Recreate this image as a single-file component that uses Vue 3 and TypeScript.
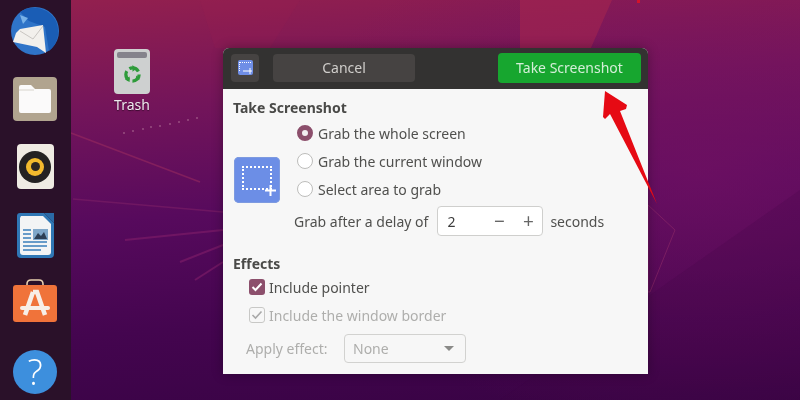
<script setup lang="ts">
const captureModes = [
  { label: 'Grab the whole screen', selected: true },
  { label: 'Grab the current window', selected: false },
  { label: 'Select area to grab', selected: false }
]
const specks = [
  [124, 133], [133, 131], [143, 129], [151, 127], [160, 126], [170, 124], [179, 122], [188, 120], [197, 118]
]
</script>

<template>
  <div class="screen">
    <svg class="wallpaper" width="800" height="400" viewBox="0 0 800 400">
      <polygon points="520,0 612,0 590,50 520,60" fill="#a8264f" opacity="0.55" />
      <polygon points="200,0 300,0 270,48 215,48" fill="#a3244f" opacity="0.15" />
      <polygon points="648,205 675,230 650,292 648,292" fill="none" stroke="#8d2a68" stroke-width="1" opacity="0.6" />
      <polygon points="500,400 800,190 800,400" fill="#3b0445" opacity="0.18" />
      <line x1="71" y1="133" x2="200" y2="182" stroke="#a12f5f" stroke-width="1.5" opacity="0.5" />
      <line x1="73" y1="199" x2="223" y2="212" stroke="#7d1f66" stroke-width="1.5" opacity="0.6" />
      <line x1="125" y1="240" x2="223" y2="230" stroke="#7b1b67" stroke-width="2" opacity="0.7" />
      <line x1="180" y1="262" x2="223" y2="245" stroke="#7b1b67" stroke-width="2" opacity="0.7" />
      <line x1="195" y1="280" x2="223" y2="262" stroke="#7b1b67" stroke-width="2" opacity="0.7" />
      <circle v-for="(s, i) in specks" :key="i" :cx="s[0]" :cy="s[1]" r="0.8" fill="#b77a9c" />
    </svg>

    <aside class="dock">
      <svg width="48" height="48" viewBox="0 0 48 48">
        <circle cx="24" cy="24" r="24" fill="#2f74c8" />
        <path d="M9 5 C20 -3 38 0 45 14 C50 26 46 38 38 44 L34 20 L18 14 Z" fill="#1a5db5" />
        <path d="M9 8 L17 11 L12 17 Z" fill="#79b2e8" />
        <path d="M2 35 L5 26 L9 22 L32 18 L35 46 L26 40 Z" fill="#f2f0ec" />
        <path d="M9 24 L22 32 L32 19" fill="none" stroke="#c9c6c2" stroke-width="1" />
      </svg>
      <div class="files">
        <svg width="32" height="28" viewBox="0 0 32 28">
          <path d="M2 0 H12 L16 4 H30 Q32 4 32 6 V26 Q32 28 30 28 H2 Q0 28 0 26 V2 Q0 0 2 0 Z" fill="#fbfafa" />
          <path d="M0 5 H15" stroke="#d8d4cc" stroke-width="1" />
        </svg>
      </div>
      <div class="rhythmbox">
        <div class="speaker"><div class="cone"><div class="hub"></div></div></div>
      </div>
      <svg class="writer" width="37" height="45" viewBox="0 0 37 45">
        <path d="M3 0 H27 L37 10 V41 Q37 45 33 45 H4 Q0 45 0 41 V3 Q0 0 3 0 Z" fill="#2f77b5" />
        <path d="M4 3 H26 L34 11 V39 Q34 42 31 42 H6 Q3 42 3 39 V5 Z" fill="#f3f4f5" />
        <path d="M27 0 L37 0 L37 10 Z" fill="#2a6aa6" />
        <path d="M6 17 H14 M6 21 H14 M6 25 H14 M6 29 H30 M6 33 H30 M6 37 H24" stroke="#3a7dbb" stroke-width="1.5" />
        <rect x="16" y="16" width="15" height="11" fill="#7fa7c9" />
        <path d="M17 26 L21 20 L24 23 L27 19 L30 26 Z" fill="#2d3f55" />
      </svg>
      <svg class="software" width="44" height="43" viewBox="0 0 44 43">
        <path d="M14 8 V5 Q14 1 18 1 H26 Q30 1 30 5 V8" fill="none" stroke="#e8cfae" stroke-width="1.6" />
        <rect y="6" width="44" height="37" rx="3" fill="#f0733a" />
        <path d="M20 13 H24 L32 36 M20 13 L12 36" stroke="#f7efe8" stroke-width="4.5" fill="none" />
        <path d="M9 29 H35" stroke="#f7efe8" stroke-width="4" stroke-linecap="round" />
      </svg>
      <div class="help">?</div>
    </aside>

    <div class="trash">
      <div class="can">
        <div class="lid"></div>
        <svg width="19" height="19" viewBox="0 0 20 20">
          <circle cx="10" cy="10" r="7" fill="none" stroke="#2e9b3a" stroke-width="3.4" stroke-dasharray="11 3.66" />
          <path d="M10 0 L14 4 L10 7 Z M18 15 L13 16 L14 11 Z M2 15 L7 12 L7 18 Z" fill="#2e9b3a" />
        </svg>
      </div>
      <span>Trash</span>
    </div>

    <section class="dialog">
      <header class="titlebar">
        <button class="btn icon-btn">
          <span class="mini-shot">
            <i></i>
            <svg class="mini-plus" width="9" height="6" viewBox="0 0 9 6">
              <path d="M0 3 H9 M7 0 V6" stroke="#fff" stroke-width="1" />
            </svg>
          </span>
        </button>
        <button class="btn cancel">Cancel</button>
        <button class="btn primary">Take Screenshot</button>
      </header>

      <div class="body">
        <h3>Take Screenshot</h3>
        <div class="capture">
          <div class="big-shot">
            <div class="marquee"></div>
            <svg class="plus" width="13" height="13" viewBox="0 0 13 13">
              <path d="M6.5 1 V12 M1 6.5 H12" stroke="#fff" stroke-width="2" />
            </svg>
          </div>
          <div class="modes">
            <label v-for="mode in captureModes" :key="mode.label" class="row">
              <span :class="['radio', { 'is-on': mode.selected }]"></span>
              {{ mode.label }}
            </label>
          </div>
        </div>
        <div class="delay">
          <span>Grab after a delay of</span>
          <div class="spin">
            <span class="value">2</span>
            <span class="step">−</span>
            <span class="step">+</span>
          </div>
          <span>seconds</span>
        </div>

        <h3 class="effects-title">Effects</h3>
        <div class="effects">
          <label class="row check-row">
            <span class="check is-on">
              <svg width="12" height="10" viewBox="0 0 12 10"><path d="M1.5 5 L4.5 8 L10.5 1.5" fill="none" stroke="#fff" stroke-width="2" /></svg>
            </span>
            Include pointer
          </label>
          <label class="row check-row disabled">
            <span class="check">
              <svg width="12" height="10" viewBox="0 0 12 10"><path d="M1.5 5 L4.5 8 L10.5 1.5" fill="none" stroke="#a9a9a9" stroke-width="1.6" /></svg>
            </span>
            Include the window border
          </label>
        </div>
        <div class="apply disabled">
          <span class="apply-label">Apply effect:</span>
          <div class="combo">
            <span>None</span>
            <i class="caret"></i>
          </div>
        </div>
      </div>
    </section>

    <svg class="arrow" width="800" height="400" viewBox="0 0 800 400">
      <polygon points="605,91 627,105 626,109 620,111 657,204 610,114 605,119 603,117" fill="#e60a14" />
      <rect x="637" y="0" width="3" height="3" fill="#d3132a" />
    </svg>
  </div>
</template>

<style>
html, body { margin: 0; }
</style>

<style scoped>
.screen {
  position: relative;
  width: 800px;
  height: 400px;
  overflow: hidden;
  font-family: "Noto Sans", "Open Sans", sans-serif;
  font-size: 14px;
  filter: blur(0.35px);
  background:
    radial-gradient(420px 260px at 700px 170px, rgba(118, 18, 100, 0.6), rgba(118, 18, 100, 0)),
    linear-gradient(176deg, #94204e 0%, #74155a 25%, #570a5d 50%, #44054f 75%, #380344 100%);
}

.wallpaper, .arrow {
  position: absolute;
  inset: 0;
}

.arrow { pointer-events: none; }

.dock {
  position: relative;
  box-sizing: border-box;
  width: 71px;
  height: 400px;
  padding: 7px 1px 0 0;
  display: flex;
  flex-direction: column;
  align-items: center;
  background: #2a1129;
}

.files {
  width: 44px;
  height: 44px;
  margin-top: 22px;
  border-radius: 4px;
  background: #b1a48f;
  display: flex;
  align-items: center;
  justify-content: center;
}

.rhythmbox {
  width: 37px;
  height: 45px;
  margin-top: 23px;
  border-radius: 4px;
  background: #efebe3;
  display: flex;
  align-items: center;
  justify-content: center;
}

.speaker, .cone, .hub {
  border-radius: 50%;
  display: flex;
  align-items: center;
  justify-content: center;
}

.speaker { width: 32px; height: 32px; background: #242222; }
.cone { width: 18px; height: 18px; background: #f2bb2d; }
.hub { width: 9px; height: 9px; background: #2b2722; }

.writer { margin-top: 24px; }
.software { margin-top: 21px; }

.help {
  width: 44px;
  height: 44px;
  margin-top: 28px;
  border-radius: 50%;
  background: #3d8fdd;
  color: #fff;
  font-family: "Open Sans", sans-serif;
  font-weight: 300;
  font-size: 36px;
  line-height: 44px;
  text-align: center;
}

.trash {
  position: absolute;
  left: 108px;
  top: 49px;
  width: 48px;
  display: flex;
  flex-direction: column;
  align-items: center;
  color: #efe9ee;
  text-shadow: 0 1px 1px rgba(0, 0, 0, 0.5);
}

.can {
  box-sizing: border-box;
  width: 36px;
  height: 45px;
  padding: 3px 3px 0;
  margin-bottom: 1px;
  border-radius: 4px;
  background: #ced0d0;
  display: flex;
  flex-direction: column;
  align-items: center;
  gap: 7px;
}

.lid {
  width: 100%;
  height: 6px;
  border-radius: 2px;
  background: #85838c;
}

.dialog {
  position: absolute;
  left: 223px;
  top: 48px;
  width: 425px;
  height: 326px;
  border-radius: 6px 6px 0 0;
  overflow: hidden;
  background: #f7f7f7;
  box-shadow: 0 0 12px rgba(0, 0, 0, 0.3);
  color: #50504e;
}

.titlebar {
  box-sizing: border-box;
  height: 41px;
  padding: 5px 7px 7px 8px;
  display: flex;
  align-items: center;
  background: #333231;
}

.btn {
  height: 28px;
  padding: 0;
  border: 0;
  border-radius: 4px;
  font: inherit;
  color: #cfcdca;
  background: #464342;
}

.icon-btn {
  width: 28px;
  display: flex;
  align-items: center;
  justify-content: center;
}

.mini-shot {
  position: relative;
  width: 15px;
  height: 15px;
  border-radius: 2px;
  background: #6f8ee6;
}

.mini-shot i {
  position: absolute;
  left: 1px;
  top: 2px;
  width: 11px;
  height: 8px;
  border: 1px dotted #fff;
  border-width: 1px 0 0 1px;
}

.mini-plus {
  position: absolute;
  right: 1px;
  bottom: 1px;
}

.cancel {
  width: 142px;
  margin-left: 14px;
}

.primary {
  width: 143px;
  height: 30px;
  margin-left: auto;
  color: #d4eed8;
  background: #17a62f;
}

.body {
  padding: 9px 10px 0;
}

h3 {
  margin: 0;
  font-size: 14px;
  line-height: 20px;
  font-weight: 700;
  color: #4a4a48;
}

.capture {
  display: flex;
  align-items: flex-end;
  height: 85px;
}

.big-shot {
  position: relative;
  flex: none;
  width: 46px;
  height: 46px;
  margin-left: 1px;
  border-radius: 5px;
  background: #6c8ee6;
  box-shadow: inset 0 0 0 1px #7d9ae0;
}

.marquee {
  position: absolute;
  left: 8px;
  top: 9px;
  width: 30px;
  height: 24px;
  border: 2px dotted #fff;
  box-sizing: border-box;
}

.plus {
  position: absolute;
  right: 3px;
  bottom: 6px;
}

.modes {
  margin-left: 17px;
  align-self: flex-start;
  display: flex;
  flex-direction: column;
  gap: 8px;
  padding-top: 5px;
}

.row {
  display: flex;
  align-items: center;
  height: 20px;
  gap: 5px;
  white-space: nowrap;
}

.radio {
  box-sizing: border-box;
  width: 16px;
  height: 16px;
  border-radius: 50%;
  border: 1px solid #bdbdbb;
  background: #fff;
}

.radio.is-on {
  border: 5px solid #8c4f6c;
  background: #f3eef1;
}

.delay {
  display: flex;
  align-items: center;
  height: 30px;
  margin-top: 3px;
  margin-left: 61px;
  gap: 7px;
}

.spin {
  box-sizing: border-box;
  flex: none;
  width: 106px;
  height: 30px;
  margin-left: 2px;
  padding: 0 0 0 9px;
  display: flex;
  align-items: center;
  border: 1px solid #cfcfcd;
  border-radius: 4px;
  background: #fff;
  color: #3c3c3c;
}

.value { flex: 1; }

.step {
  width: 28px;
  text-align: center;
  font-size: 19px;
  line-height: 26px;
  color: #666;
}

.step:last-child { margin-left: 1px; }

.effects-title {
  margin-top: 18px;
}

.effects {
  display: flex;
  flex-direction: column;
  gap: 8px;
  margin: 3px 0 0 16px;
}

.check-row { gap: 4px; }

.check {
  box-sizing: border-box;
  width: 16px;
  height: 16px;
  border: 1px solid #c8c8c6;
  border-radius: 3px;
  display: flex;
  align-items: center;
  justify-content: center;
}

.check.is-on {
  border: 0;
  background: #8c4f6c;
}

.disabled { color: #aeaeac; }

.apply {
  display: flex;
  align-items: center;
  margin: 9px 0 0 13px;
}

.apply-label { width: 98px; }

.combo {
  box-sizing: border-box;
  width: 122px;
  height: 29px;
  padding: 0 11px 0 8px;
  display: flex;
  align-items: center;
  justify-content: space-between;
  border: 1px solid #d2d2d0;
  border-radius: 4px;
}

.caret {
  width: 0;
  height: 0;
  border-left: 5px solid transparent;
  border-right: 5px solid transparent;
  border-top: 5px solid #8a8a88;
}
</style>
